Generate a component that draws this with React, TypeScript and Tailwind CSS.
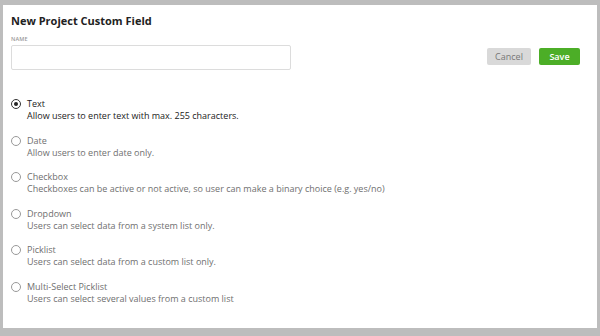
import React, { useState } from 'react';

const options = [
    { key: 'text', label: 'Text', desc: 'Allow users to enter text with max. 255 characters.' },
    { key: 'date', label: 'Date', desc: 'Allow users to enter date only.' },
    { key: 'checkbox', label: 'Checkbox', desc: 'Checkboxes can be active or not active, so user can make a binary choice (e.g. yes/no)' },
    { key: 'dropdown', label: 'Dropdown', desc: 'Users can select data from a system list only.' },
    { key: 'picklist', label: 'Picklist', desc: 'Users can select data from a custom list only.' },
    { key: 'multi', label: 'Multi-Select Picklist', desc: 'Users can select several values from a custom list' },
];

const App: React.FC = () => {
    const [selected, setSelected] = useState('text');
    const [name, setName] = useState('');

    return (
        <div
            className="w-[600px] h-[336px] bg-[#bdbdbd] pt-[5px] pl-[3px] pr-[3px] pb-[8px]"
            style={{ fontFamily: '"Open Sans", "Liberation Sans", sans-serif' }}
        >
            <div className="h-full bg-white px-2 pt-[9px]">
                <h1 className="text-[11px] font-bold text-[#222] leading-[14px]">New Project Custom Field</h1>
                <div className="mt-[7px] flex items-end justify-between">
                    <div>
                        <label className="block text-[5.5px] font-semibold uppercase text-[#999] leading-[8px] tracking-wide">Name</label>
                        <input
                            value={name}
                            onChange={(e) => setName(e.target.value)}
                            className="mt-[1px] w-[280px] h-[25px] border border-[#dcdcdc] rounded-[2px] outline-none text-[9px] px-2"
                        />
                    </div>
                    <div className="flex items-center gap-[8px] mr-[9px] mb-[5px]">
                        <button className="w-[44px] h-[17px] rounded-[2px] bg-[#d9d9d9] text-[#777] text-[9px] leading-none">
                            Cancel
                        </button>
                        <button className="w-[41px] h-[17px] rounded-[2px] bg-[#4cae27] text-white text-[9px] font-semibold leading-none">
                            Save
                        </button>
                    </div>
                </div>
                <div className="mt-[28px] flex flex-col gap-[12.5px]">
                    {options.map((opt) => {
                        const active = opt.key === selected;
                        return (
                            <div key={opt.key} className="flex cursor-pointer" onClick={() => setSelected(opt.key)}>
                                <div className="w-[16px] pt-[1px] flex-none">
                                    <div
                                        className={`w-[10px] h-[10px] rounded-full border flex items-center justify-center ${
                                            active ? 'border-[#333]' : 'border-[#999]'
                                        }`}
                                    >
                                        {active && <div className="w-[4px] h-[4px] rounded-full bg-[#222]" />}
                                    </div>
                                </div>
                                <div className={`leading-[12px] ${active ? 'text-[#222]' : 'text-[#6f6f6f]'}`}>
                                    <div className="text-[9px]">{opt.label}</div>
                                    <div className="text-[9px]">{opt.desc}</div>
                                </div>
                            </div>
                        );
                    })}
                </div>
            </div>
        </div>
    );
};

export default App;
